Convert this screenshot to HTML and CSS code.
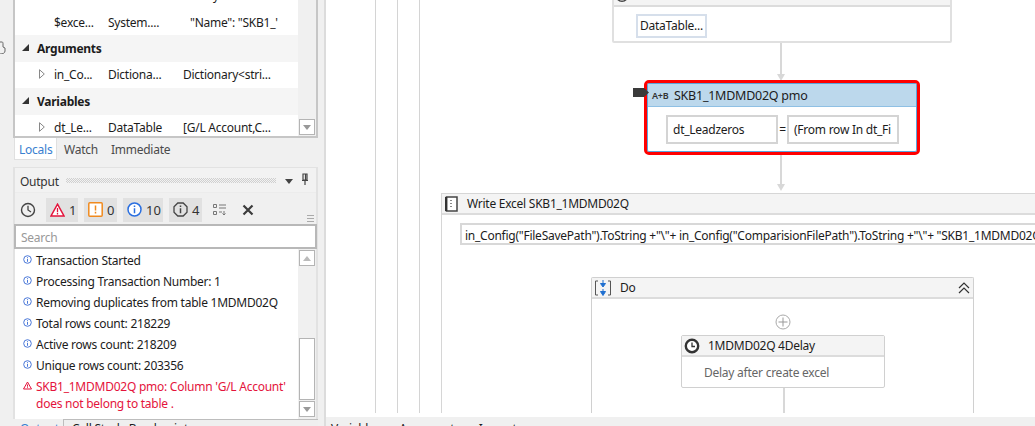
FILE: index.html
```html
<!DOCTYPE html>
<html lang="en">
<head>
<meta charset="utf-8">
<title>Designer</title>
<link rel="stylesheet" href="styles.css">
</head>
<body>
<div class="app">
  <aside class="side">
    <div class="hand"><svg width="6" height="14" viewBox="0 0 6 14"><path d="M0 2h2c1 0 1 1 1 2v3l2 1v3c0 2-2 3-5 3" fill="none" stroke="#666" stroke-width="1"/></svg></div>
    <section class="locals">
      <div class="tree">
        <div class="row clipped"><span class="val shift">Array</span></div>
        <div class="row"><span class="name">$exce...</span><span class="type">System....</span><span class="val shift">"Name": "SKB1_'</span></div>
        <div class="group"><svg class="tri" width="7" height="7" viewBox="0 0 7 7"><path d="M7 0v7H0z" fill="#333"/></svg>Arguments</div>
        <div class="row"><svg class="exp" width="6" height="10" viewBox="0 0 6 10"><path d="M.5.7v8.6L5.3 5z" fill="#fff" stroke="#888"/></svg><span class="name">in_Co...</span><span class="type">Dictiona...</span><span class="val">Dictionary&lt;stri...</span></div>
        <div class="group"><svg class="tri" width="7" height="7" viewBox="0 0 7 7"><path d="M7 0v7H0z" fill="#333"/></svg>Variables</div>
        <div class="row"><svg class="exp" width="6" height="10" viewBox="0 0 6 10"><path d="M.5.7v8.6L5.3 5z" fill="#fff" stroke="#888"/></svg><span class="name">dt_Le...</span><span class="type">DataTable</span><span class="val">[G/L Account,C...</span></div>
      </div>
      <div class="sbar sbar-locals">
        <span class="sbtn"><svg width="8" height="5" viewBox="0 0 8 5"><path d="M0 0h8L4 5z" fill="#999"/></svg></span>
      </div>
    </section>
    <nav class="tabs">
      <span class="tab active">Locals</span><span class="tab">Watch</span><span class="tab">Immediate</span>
    </nav>
    <section class="output">
      <header class="out-head">
        <span class="out-title">Output</span>
        <span class="grip"></span>
        <svg class="caret" width="8" height="5" viewBox="0 0 8 5"><path d="M0 0h8L4 5z" fill="#444"/></svg>
        <svg class="pin" width="8" height="12" viewBox="0 0 8 12"><path d="M2 1h4v6H2zM1 7.500h6M4 8v4M4.500 1v6" fill="none" stroke="#444" stroke-width="1.200"/></svg>
      </header>
      <div class="toolbar">
        <svg class="clock" width="16" height="16" viewBox="0 0 16 16"><circle cx="8" cy="8" r="6.500" fill="none" stroke="#444" stroke-width="1.400"/><path d="M8 3.800V8l3 2" fill="none" stroke="#444" stroke-width="1.300"/></svg>
        <span class="tbtn w32"><svg width="15" height="14" viewBox="0 0 15 14"><path d="M7.500 1.200 14 13H1z" fill="#fff" stroke="#e4143c" stroke-width="1.500"/><path d="M7.500 5v4.300M7.500 10v1.500" stroke="#e4143c" stroke-width="1.300"/></svg>1</span>
        <span class="tbtn w33"><svg width="15" height="15" viewBox="0 0 15 15"><rect x=".8" y=".8" width="13.400" height="13.400" rx="1" fill="#fff" stroke="#f08a1e" stroke-width="1.500"/><path d="M7.500 3.500v5M7.500 9.800v1.700" stroke="#f08a1e" stroke-width="1.500"/></svg>0</span>
        <span class="tbtn w40"><svg width="15" height="15" viewBox="0 0 15 15"><circle cx="7.500" cy="7.500" r="6.500" fill="#fff" stroke="#2a6fe0" stroke-width="1.500"/><path d="M7.500 3.500v1.500M7.500 6.300v5" stroke="#2a6fe0" stroke-width="1.500"/></svg>10</span>
        <span class="tbtn w33"><svg width="15" height="15" viewBox="0 0 15 15"><path d="M4.800 1h5.400L14 4.800v5.400L10.200 14H4.800L1 10.200V4.800z" fill="none" stroke="#444" stroke-width="1.300"/><path d="M7.500 3.500v1.500M7.500 6.300v5" stroke="#444" stroke-width="1.500"/></svg>4</span>
        <svg class="listic" width="13" height="12" viewBox="0 0 13 12"><path d="M.5.500h3v3h-3zM.5 7.500h3v3h-3zM6 1h7M6 4h7M6 8h3M11 7v4M9.500 9.500 11 11l1.500-1.500" fill="none" stroke="#777"/></svg>
        <svg class="closeic" width="12" height="12" viewBox="0 0 12 12"><path d="M1.500 1.500l9 9M10.500 1.500l-9 9" stroke="#3c3c3c" stroke-width="2.200"/></svg>
        <span class="mini"></span>
      </div>
      <div class="search">Search</div>
      <div class="logwrap">
        <ul class="log">
          <li class="li"><svg class="inf" width="9" height="9" viewBox="0 0 9 9"><circle cx="4.500" cy="4.500" r="3.800" fill="#fff" stroke="#4a78d8"/><path d="M4.500 2.200v.8M4.500 3.800v3" stroke="#4a78d8"/></svg>Transaction Started</li>
          <li class="li"><svg class="inf" width="9" height="9" viewBox="0 0 9 9"><circle cx="4.500" cy="4.500" r="3.800" fill="#fff" stroke="#4a78d8"/><path d="M4.500 2.200v.8M4.500 3.800v3" stroke="#4a78d8"/></svg>Processing Transaction Number: 1</li>
          <li class="li"><svg class="inf" width="9" height="9" viewBox="0 0 9 9"><circle cx="4.500" cy="4.500" r="3.800" fill="#fff" stroke="#4a78d8"/><path d="M4.500 2.200v.8M4.500 3.800v3" stroke="#4a78d8"/></svg>Removing duplicates from table 1MDMD02Q</li>
          <li class="li"><svg class="inf" width="9" height="9" viewBox="0 0 9 9"><circle cx="4.500" cy="4.500" r="3.800" fill="#fff" stroke="#4a78d8"/><path d="M4.500 2.200v.8M4.500 3.800v3" stroke="#4a78d8"/></svg>Total rows count: 218229</li>
          <li class="li"><svg class="inf" width="9" height="9" viewBox="0 0 9 9"><circle cx="4.500" cy="4.500" r="3.800" fill="#fff" stroke="#4a78d8"/><path d="M4.500 2.200v.8M4.500 3.800v3" stroke="#4a78d8"/></svg>Active rows count: 218209</li>
          <li class="li"><svg class="inf" width="9" height="9" viewBox="0 0 9 9"><circle cx="4.500" cy="4.500" r="3.800" fill="#fff" stroke="#4a78d8"/><path d="M4.500 2.200v.8M4.500 3.800v3" stroke="#4a78d8"/></svg>Unique rows count: 203356</li>
          <li class="li err"><svg class="inf" width="9" height="9" viewBox="0 0 9 9"><path d="M4.500 1 8.500 8H.5z" fill="#fff" stroke="#e4143c"/><path d="M4.500 3.500v2.200M4.500 6.300v.8" stroke="#e4143c"/></svg><span>SKB1_1MDMD02Q pmo: Column 'G/L Account'<br>does not belong to table .</span></li>
        </ul>
        <div class="sbar sbar-log">
          <span class="sbtn"><svg width="8" height="5" viewBox="0 0 8 5"><path d="M4 0l4 5H0z" fill="#bbb"/></svg></span>
          <span class="thumb"></span>
          <span class="sbtn"><svg width="8" height="5" viewBox="0 0 8 5"><path d="M0 0h8L4 5z" fill="#999"/></svg></span>
        </div>
      </div>
    </section>
    <footer class="side-tabs">
      <span class="st-out">Output</span><span class="st-rest">Call Stack &nbsp;Breakpoints</span>
    </footer>
  </aside>
  <main class="main">
    <div class="canvas">
      <div class="stage">
        <i class="vline v1"></i><i class="vline v2"></i><i class="vline v3"></i>

        <div class="node top-node">
          <div class="node-head">
            <svg width="16" height="16" viewBox="0 0 16 16"><circle cx="8" cy="8" r="6.200" fill="#fff" stroke="#444" stroke-width="1.400"/></svg>
          </div>
          <div class="chip">DataTable...</div>
        </div>
        <i class="wire w-a"></i><i class="arrow a-a"></i>

        <div class="assign">
          <div class="assign-head"><span class="ab">A+B</span>SKB1_1MDMD02Q pmo</div>
          <div class="assign-body">
            <span class="field f-to">dt_Leadzeros</span><span class="eq">=</span><span class="field f-val">(From row In dt_Fi</span>
          </div>
        </div>
        <svg class="bp" width="16" height="9" viewBox="0 0 16 9"><path d="M0 0h11l5 4.500L11 9H0z" fill="#3a3a3a"/></svg>
        <i class="wire w-b"></i><i class="arrow a-b"></i>

        <div class="node excel">
          <div class="node-head big">
            <svg width="13" height="16" viewBox="0 0 13 16"><rect x="1.500" y="1" width="10.500" height="14" fill="#fff" stroke="#444" stroke-width="1.500"/><path d="M1 1v14" stroke="#333" stroke-width="2.500"/><path d="M5 4.500h2M5 7.500h2M5 10.500h2" stroke="#888"/></svg>
            Write Excel SKB1_1MDMD02Q
          </div>
          <div class="path">in_Config("FileSavePath").ToString +"\"+ in_Config("ComparisionFilePath").ToString +"\"+ "SKB1_1MDMD02Q.xlsx"</div>
        </div>

        <div class="node do">
          <div class="node-head big">
            <svg width="18" height="16" viewBox="0 0 18 16"><path d="M4 1H1.500v14H4M14 1h2.500v14H14" fill="none" stroke="#555"/><path d="M9 0v4M6.500 3.500h5L9 7zM9 9v3M6.500 11.500h5L9 15.500z" fill="#1f6fd0" stroke="#1f6fd0"/></svg>
            <span class="do-t">Do</span>
            <svg class="chev" width="12" height="12" viewBox="0 0 12 12"><path d="M1 6l5-5 5 5M1 11l5-5 5 5" fill="none" stroke="#333" stroke-width="1.200"/></svg>
          </div>
        </div>

        <svg class="plus" width="16" height="16" viewBox="0 0 16 16"><circle cx="8" cy="8" r="7" fill="#fff" stroke="#aaa"/><path d="M8 3.500v9M3.500 8h9" stroke="#999"/></svg>
        <div class="node delay">
          <div class="node-head">
            <svg width="16" height="16" viewBox="0 0 16 16"><circle cx="8" cy="8" r="6.200" fill="#fff" stroke="#333" stroke-width="2.400"/><path d="M8 4.500V8.500h3" fill="none" stroke="#333" stroke-width="1.300"/></svg>
            1MDMD02Q 4Delay
          </div>
          <div class="delay-body">Delay after create excel</div>
        </div>
        <i class="wire w-c"></i>
      </div>
    </div>
    <footer class="main-tabs"><span>Variables</span><span>Arguments</span><span>Imports</span></footer>
  </main>
</div>
</body>
</html>
```

FILE: styles.css
```css
* { box-sizing: border-box; }
html, body { margin: 0; padding: 0; height: 100%; overflow: hidden; }
body { font-family: "Noto Sans", "Open Sans", sans-serif; font-size: 12px; letter-spacing: -.25px; color: #1c1c1c; background: #fff; }
svg { display: block; flex: none; }
.app { display: flex; width: 1035px; height: 426px; overflow: hidden; }

/* left column */
.side { width: 326px; height: 426px; flex: none; background: #f0f0f0; border-right: 2px solid #dcdcdc; padding-left: 13px; padding-right: 6px; display: flex; flex-direction: column; position: relative; overflow: hidden; }
.hand { position: absolute; left: 0; top: 40px; }

.locals { height: 138px; flex: none; background: #fff; border: 2px solid #c6c6c6; border-top: 0; display: flex; overflow: hidden; position: relative; }
.tree { flex: 1; margin-top: -15px; min-width: 0; }
.row { height: 26.400px; display: flex; align-items: center; position: relative; white-space: nowrap; }
.row.clipped { height: 24px; align-items: flex-start; padding-top: 2px; }
.name { position: absolute; left: 39px; }
.type { position: absolute; left: 93px; }
.val { position: absolute; left: 168px; }
.val.shift { left: 175px; }
.exp { position: absolute; left: 24px; top: 7px; }
.group { height: 26.400px; background: #f5f5f5; font-weight: 700; display: flex; align-items: center; padding-left: 7px; gap: 8px; }
.tri { margin-bottom: 2px; }

.sbar { width: 18px; flex: none; background: #f0f0f0; display: flex; flex-direction: column; align-items: center; }
.sbar-locals { justify-content: flex-end; padding-bottom: 1px; }
.sbtn { width: 16px; height: 16px; background: #fff; border: 1px solid #b4b4b4; display: flex; align-items: center; justify-content: center; flex: none; }

.tabs { height: 23px; flex: none; display: flex; align-items: flex-start; padding-left: 1px; }
.tab { height: 22px; line-height: 24px; color: #4a4a4a; padding: 0 6px 0 7px; }
.tab.active { background: #fff; color: #3a80d0; border: 1px solid #e0e0e0; border-top: 0; padding: 0 4px; width: 43px; line-height: 23px; }

.output { margin-top: 6px; flex: none; height: 252px; border: 2px solid #e2e2e2; border-bottom: 0; border-top-width: 1px; display: flex; flex-direction: column; }
.out-head { height: 25px; display: flex; align-items: center; background: #f2f2f2; padding: 2px 7px 0 5px; flex: none; border-bottom: 1px solid #ececec; }
.out-title { color: #333; width: 47px; }
.grip { width: 212px; height: 5px; margin-top: -2px; background-color: #f2f2f2; background-image: conic-gradient(#cfcfcf 25%, transparent 0 50%, #cfcfcf 0 75%, transparent 0); background-size: 2px 2px; }
.caret { margin-left: 9px; margin-top: 1px; }
.pin { margin-left: 8px; margin-top: -5px; }

.toolbar { height: 31px; flex: none; display: flex; align-items: center; padding-top: 2px; padding-left: 5px; position: relative; }
.clock { margin-right: 10px; }
.tbtn { height: 24px; background: #e1e1e1; display: flex; align-items: center; gap: 4px; padding-left: 4px; margin-right: 6px; font-size: 13px; letter-spacing: 0; color: #333; }
.w32 { width: 32px; } .w33 { width: 33px; } .w40 { width: 40px; }
.listic { margin-left: 5px; }
.closeic { margin-left: 16px; }
.mini { position: absolute; right: 2px; bottom: 2px; width: 7px; height: 7px; background: repeating-linear-gradient(#aaa 0 1px, transparent 1px 3px); }

.search { height: 25px; flex: none; background: #fff; border: 2px solid #b8b8b8; margin: 0 -1px; padding-left: 5px; line-height: 24px; color: #999; }
.logwrap { flex: 1; display: flex; min-height: 0; background: #fff; }
.log { list-style: none; margin: 0; padding: 1px 0 0; flex: 1; min-width: 0; }
.li { min-height: 21px; line-height: 21px; display: flex; align-items: flex-start; padding-left: 8px; gap: 4px; white-space: nowrap; }
.inf { margin-top: 5px; }
.err { color: #e4143c; line-height: 17px; padding-top: 2px; }
.err .inf { margin-top: 3px; }
.sbar-log { padding-top: 1px; padding-bottom: 2px; }
.sbar-log .thumb { flex: none; width: 16px; height: 62px; background: #fff; border: 1px solid #b4b4b4; margin-top: auto; margin-bottom: 1px; }

.side-tabs { flex: 1; display: flex; align-items: flex-start; margin-left: -13px; padding-left: 20px; min-height: 0; overflow: hidden; position: relative; }
.st-out { color: #3a80d0; width: 43px; line-height: 19px; }
.st-rest { flex: 1; background: #efefef; border-top: 1px solid #bdbdbd; border-left: 1px solid #bdbdbd; padding-left: 8px; line-height: 18px; }

/* designer */
.main { flex: 1; min-width: 0; display: flex; flex-direction: column; }
.canvas { height: 417px; flex: none; background: #fff; }
.stage { height: 413px; position: relative; overflow: hidden; }
.main-tabs { flex: 1; background: #f0f0f0; display: flex; gap: 19px; padding-left: 5px; line-height: 18px; padding-top: 3px; overflow: hidden; }
.vline { position: absolute; top: 0; bottom: 0; width: 1px; background: #d4d4d4; }
.v1 { left: 49px; } .v2 { left: 71px; } .v3 { left: 93px; }

.node { position: absolute; background: #fff; border: 1px solid #d0d0d0; border-radius: 2px; }
.node-head { background: #f4f4f4; border-bottom: 2px solid #dcdcdc; display: flex; align-items: center; gap: 6px; padding-left: 2px; }
.node-head.big { height: 21px; }
.top-node { left: 286px; top: -15px; width: 340px; height: 58px; border-width: 2px; border-color: #e0e0e0; }
.top-node .node-head { height: 20px; align-items: flex-end; padding: 0 0 2px 0; }
.chip { position: absolute; left: 22px; top: 27px; border: 2px solid #d6dfeb; padding: 0 2px; height: 24px; line-height: 20px; }

.wire { position: absolute; width: 2px; background: #d8d8d8; left: 454px; }
.w-a { top: 43px; height: 31px; }
.w-b { top: 155px; height: 30px; }
.w-c { top: 388px; height: 25px; left: 457px; }
.arrow { position: absolute; left: 451px; width: 0; height: 0; border-left: 4px solid transparent; border-right: 4px solid transparent; border-top: 7px solid #d8d8d8; }
.a-a { top: 74px; }
.a-b { top: 184px; }

.bp { position: absolute; left: 307px; top: 88px; }
.assign { position: absolute; left: 318px; top: 80px; width: 276px; height: 75px; background: #fff; border: 3px solid #f00; border-radius: 5px; box-shadow: inset 0 0 0 1px #5aa5dc; }
.assign-head { height: 23px; margin: 1px 1px 0; background: #bcd8ec; border-bottom: 1px solid #8fc0e4; display: flex; align-items: center; font-size: 12.500px; }
.ab { font-size: 9px; width: 26px; padding-left: 4px; color: #333; font-weight: 600; }
.assign-body { display: flex; align-items: center; padding: 8px 0 0 19px; }
.field { display: block; height: 29px; border: 2px solid #d4d4d4; line-height: 25px; padding-left: 5px; overflow: hidden; white-space: nowrap; }
.f-to { width: 112px; }
.eq { width: 9px; text-align: center; }
.f-val { width: 112px; }

.excel { left: 115px; top: 193px; width: 640px; height: 240px; border-color: #d6d6d6; border-width: 1px 0 0 1px; border-radius: 0; }
.excel .node-head { gap: 9px; padding-left: 3px; }
.path { position: absolute; left: 18px; top: 29px; right: 0; height: 22px; border: 2px solid #d8d8d8; border-right: 0; overflow: hidden; white-space: nowrap; line-height: 22px; padding-left: 3px; letter-spacing: -.25px; }
.do { left: 265px; top: 277px; width: 383px; height: 200px; border-width: 1px 1px 0; border-color: #d0d0d0; }
.do-t { margin-left: 2px; }
.chev { margin-left: auto; margin-right: 3px; }
.plus { position: absolute; left: 449px; top: 314px; }
.delay { left: 355px; top: 335px; width: 204px; height: 53px; border-width: 1px; }
.delay .node-head { height: 21px; gap: 8px; padding-left: 2px; }
.delay-body { color: #666; padding: 7px 0 0 22px; }
```
